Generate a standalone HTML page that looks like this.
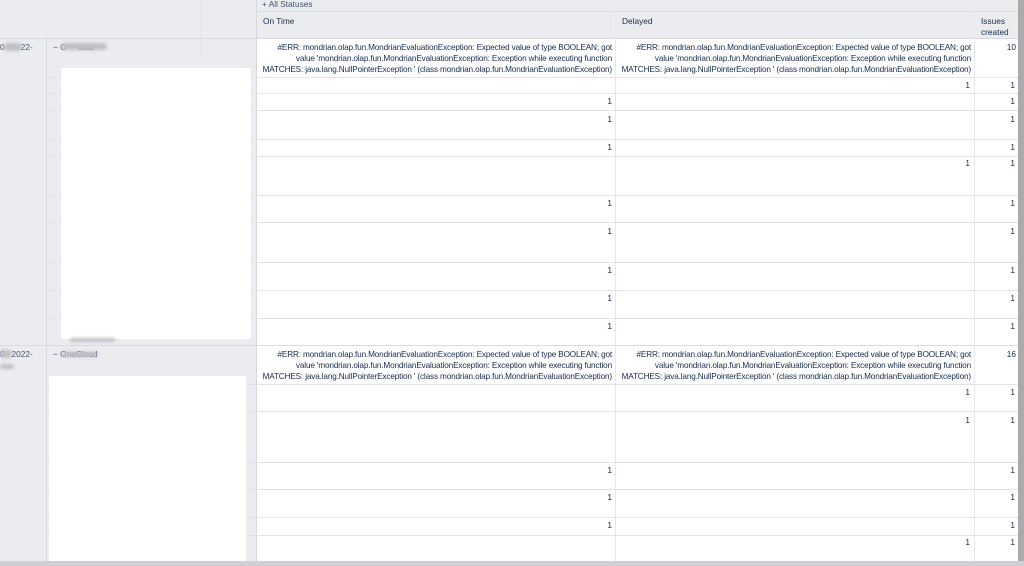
<!DOCTYPE html>
<html><head><meta charset="utf-8"><style>
*{margin:0;padding:0;box-sizing:border-box}
body{width:1024px;height:566px;overflow:hidden;background:#ebecf0;font-family:"Liberation Sans",sans-serif;color:#172b4d;position:relative;font-size:8.3px}
div{position:absolute}
.h{height:1px;background:#e2e4e9}
.v{width:1px;background:#dcdee4}
.n{width:40px;text-align:right;line-height:10px}
.e{width:355px;text-align:right;line-height:11px;white-space:nowrap;letter-spacing:-0.15px;font-size:8.2px}
.blur{background:#bfbfc4;border-radius:4px;filter:blur(1.5px)}
</style></head><body>
<!-- white data area -->
<div style="left:257px;top:39px;width:761px;height:522px;background:#fff"></div>
<!-- header -->
<div style="left:262px;top:-1px;font-size:8.3px;color:#42526e">+ All Statuses</div>
<div class="h" style="left:256px;top:11px;width:762px;background:#dcdee4"></div>
<div style="left:263px;top:16px">On Time</div>
<div style="left:622px;top:16px">Delayed</div>
<div style="left:981px;top:16px;line-height:11px">Issues<br>created</div>
<div class="v" style="left:200px;top:0;height:60px;background:#e3e4e8"></div>
<div class="h" style="left:0;top:38px;width:1018px;background:#d9dbe1"></div>
<!-- vertical lines -->
<div class="v" style="left:256px;top:0;height:561px;background:#d5d8df"></div>
<div class="v" style="left:615px;top:11px;height:550px;background:#e6e8ec"></div>
<div class="v" style="left:974px;top:11px;height:550px;background:#e6e8ec"></div>
<div class="v" style="left:46px;top:39px;height:522px;background:#d5d8df"></div>
<!-- horizontal lines -->
<div class="h" style="left:47px;top:77px;width:971px"></div>
<div class="h" style="left:47px;top:93px;width:971px"></div>
<div class="h" style="left:47px;top:110px;width:971px"></div>
<div class="h" style="left:47px;top:139px;width:971px"></div>
<div class="h" style="left:47px;top:156px;width:971px"></div>
<div class="h" style="left:47px;top:195px;width:971px"></div>
<div class="h" style="left:47px;top:222px;width:971px"></div>
<div class="h" style="left:47px;top:262px;width:971px"></div>
<div class="h" style="left:47px;top:290px;width:971px"></div>
<div class="h" style="left:47px;top:318px;width:971px"></div>
<div class="h" style="left:0;top:345px;width:1018px;background:#d9dbe1"></div>
<div class="h" style="left:47px;top:384px;width:971px"></div>
<div class="h" style="left:47px;top:411px;width:971px"></div>
<div class="h" style="left:47px;top:462px;width:971px"></div>
<div class="h" style="left:47px;top:489px;width:971px"></div>
<div class="h" style="left:47px;top:517px;width:971px"></div>
<div class="h" style="left:47px;top:535px;width:971px"></div>
<!-- left labels -->
<div style="left:0;top:42px;color:#42526e">0&nbsp;&nbsp;&nbsp;&nbsp;&nbsp;&nbsp;&nbsp;22-</div>
<div class="blur" style="left:4px;top:43px;width:18px;height:8px"></div>
<div style="left:53px;top:42px;color:#42526e">− O&nbsp;&nbsp;&nbsp;&nbsp;&nbsp;ιoud</div>
<div class="blur" style="left:62px;top:43px;width:45px;height:7px"></div>
<div style="left:61px;top:68px;width:190px;height:271px;background:#fff"></div>
<div class="blur" style="left:70px;top:338px;width:45px;height:4px"></div>
<div style="left:0;top:349px;color:#42526e">0&nbsp;&nbsp;&nbsp;2022-</div>
<div class="blur" style="left:0;top:350px;width:12px;height:8px"></div>
<div class="blur" style="left:0;top:364px;width:14px;height:5px"></div>
<div style="left:53px;top:349px;color:#42526e">− OneCloud</div>
<div class="blur" style="left:62px;top:352px;width:35px;height:5px"></div>
<div style="left:49px;top:376px;width:197px;height:185px;background:#fff"></div>
<!-- error rows -->
<div class="e" style="left:257px;top:42px">#ERR: mondrian.olap.fun.MondrianEvaluationException: Expected value of type BOOLEAN; got<br>value 'mondrian.olap.fun.MondrianEvaluationException: Exception while executing function<br>MATCHES: java.lang.NullPointerException ' (class mondrian.olap.fun.MondrianEvaluationException)</div>
<div class="e" style="left:616px;top:42px">#ERR: mondrian.olap.fun.MondrianEvaluationException: Expected value of type BOOLEAN; got<br>value 'mondrian.olap.fun.MondrianEvaluationException: Exception while executing function<br>MATCHES: java.lang.NullPointerException ' (class mondrian.olap.fun.MondrianEvaluationException)</div>
<div class="n" style="left:976px;top:42px">10</div>
<div class="e" style="left:257px;top:349px">#ERR: mondrian.olap.fun.MondrianEvaluationException: Expected value of type BOOLEAN; got<br>value 'mondrian.olap.fun.MondrianEvaluationException: Exception while executing function<br>MATCHES: java.lang.NullPointerException ' (class mondrian.olap.fun.MondrianEvaluationException)</div>
<div class="e" style="left:616px;top:349px">#ERR: mondrian.olap.fun.MondrianEvaluationException: Expected value of type BOOLEAN; got<br>value 'mondrian.olap.fun.MondrianEvaluationException: Exception while executing function<br>MATCHES: java.lang.NullPointerException ' (class mondrian.olap.fun.MondrianEvaluationException)</div>
<div class="n" style="left:976px;top:349px">16</div>
<!-- numbers: delayed right 970, ontime right 612, issues right 1015 -->
<div class="n" style="left:930px;top:80px">1</div><div class="n" style="left:975px;top:80px">1</div>
<div class="n" style="left:572px;top:96px">1</div><div class="n" style="left:975px;top:96px">1</div>
<div class="n" style="left:572px;top:114px">1</div><div class="n" style="left:975px;top:114px">1</div>
<div class="n" style="left:572px;top:142px">1</div><div class="n" style="left:975px;top:142px">1</div>
<div class="n" style="left:930px;top:158px">1</div><div class="n" style="left:975px;top:158px">1</div>
<div class="n" style="left:572px;top:198px">1</div><div class="n" style="left:975px;top:198px">1</div>
<div class="n" style="left:572px;top:226px">1</div><div class="n" style="left:975px;top:226px">1</div>
<div class="n" style="left:572px;top:265px">1</div><div class="n" style="left:975px;top:265px">1</div>
<div class="n" style="left:572px;top:293px">1</div><div class="n" style="left:975px;top:293px">1</div>
<div class="n" style="left:572px;top:321px">1</div><div class="n" style="left:975px;top:321px">1</div>
<div class="n" style="left:930px;top:387px">1</div><div class="n" style="left:975px;top:387px">1</div>
<div class="n" style="left:930px;top:415px">1</div><div class="n" style="left:975px;top:415px">1</div>
<div class="n" style="left:572px;top:465px">1</div><div class="n" style="left:975px;top:465px">1</div>
<div class="n" style="left:572px;top:492px">1</div><div class="n" style="left:975px;top:492px">1</div>
<div class="n" style="left:572px;top:520px">1</div><div class="n" style="left:975px;top:520px">1</div>
<div class="n" style="left:930px;top:537px">1</div><div class="n" style="left:975px;top:537px">1</div>
<!-- scrollbar and bottom -->
<div style="left:1018px;top:0;width:6px;height:566px;background:#ababab"></div>
<div style="left:0;top:561px;width:1024px;height:5px;background:#cfd0d3"></div>
</body></html>
